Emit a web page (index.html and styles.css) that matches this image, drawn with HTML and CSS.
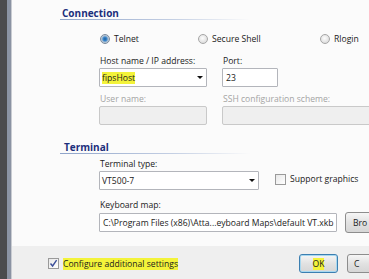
FILE: index.html
```html
<!DOCTYPE html>
<html>
<head>
<meta charset="utf-8">
<link rel="stylesheet" href="styles.css">
</head>
<body>
<div class="window">
  <div class="strip"><div class="s1"></div><div class="s2"></div><div class="s3"></div></div>
  <div class="main">
    <div class="content">
      <div class="title t-conn">Connection</div>
      <div class="rule"></div>
      <div class="radios">
        <div class="radio-item w1"><span class="radio on"></span><span>Telnet</span></div>
        <div class="radio-item w2"><span class="radio"></span><span>Secure Shell</span></div>
        <div class="radio-item"><span class="radio"></span><span>Rlogin</span></div>
      </div>
      <div class="grid g1">
        <div class="label">Host name / IP address:</div>
        <div class="label">Port:</div>
        <div class="box combo"><span class="hl">fipsHost</span><span class="arrow"></span></div>
        <div class="box port">23</div>
      </div>
      <div class="grid g2">
        <div class="label dis">User name:</div>
        <div class="label dis">SSH configuration scheme:</div>
        <div class="box disabled"></div>
        <div class="box disabled wide"></div>
      </div>
      <div class="title t-term">Terminal</div>
      <div class="rule"></div>
      <div class="term">
        <div class="label">Terminal type:</div>
        <div class="row">
          <div class="box combo ttype"><span>VT500-7</span><span class="arrow"></span></div>
          <div class="check-item"><span class="check"></span><span>Support graphics</span></div>
        </div>
        <div class="label kb">Keyboard map:</div>
        <div class="row">
          <div class="box kbmap">C:\Program Files (x86)\Atta...eyboard Maps\default VT.xkb</div>
          <div class="btn browse">Bro</div>
        </div>
      </div>
    </div>
    <div class="footer">
      <div class="check-item cfg"><span class="check checked"><svg width="9" height="9" viewBox="0 0 9 9"><path d="M1.5 4.5 L3.6 7 L7.6 1.2" fill="none" stroke="#3c4f9a" stroke-width="1.4"/></svg></span><span class="hl">Configure additional settings</span></div>
      <div class="btn ok"><span class="hl">OK</span></div>
      <div class="btn cancel">C</div>
    </div>
  </div>
</div>
</body>
</html>
```
FILE: styles.css
```css
html, body { margin: 0; padding: 0; }
body { width: 369px; height: 279px; overflow: hidden; font-family: "Open Sans", "DejaVu Sans", sans-serif; font-size: 8.6px; color: #1a1a1a; }
.window { display: flex; width: 369px; height: 279px; }
.strip { display: flex; width: 12px; flex: none; }
.s1 { width: 7px; background: #4b4b4d; }
.s2 { width: 4px; background: #8b93a3; }
.s3 { width: 1px; background: #c9ccd2; }
.main { flex: 1; display: flex; flex-direction: column; min-width: 0; }
.content { height: 246px; background: #fbfbfb; padding-top: 7px; box-sizing: border-box; overflow: hidden; }
.title { font-weight: bold; font-size: 10px; line-height: 12px; height: 12px; color: #1c2f7c; margin-left: 50px; }
.t-term { margin-left: 52px; margin-top: 16px; }
.rule { height: 1px; width: 190px; margin-left: 48px; background: linear-gradient(to right, #8ea3c9, #c5d0e4 60%, rgba(220,226,236,0)); }
.radios { display: flex; margin-left: 88px; margin-top: 12px; height: 14px; align-items: center; }
.radio-item { display: flex; align-items: center; gap: 4px; }
.w1 { width: 98px; }
.w2 { width: 122px; }
.radio { width: 10px; height: 10px; border-radius: 50%; border: 1px solid #a6a6a6; background: radial-gradient(circle at 45% 40%, #fdfdfd, #d2d2d2); box-sizing: border-box; }
.radio.on { border-color: #7a8a9c; background: radial-gradient(circle, #1d5e9c 0, #3c8ad0 2px, #9fb7cf 3px, #e8e8e8 5px); }
.grid { display: grid; grid-template-columns: 108px 1fr; column-gap: 15px; margin-left: 87px; }
.g1 { margin-top: 10px; }
.g2 { margin-top: 7px; }
.label { line-height: 11px; height: 11px; padding-left: 1px; margin-bottom: 1px; white-space: nowrap; }
.label.dis { color: #a4a4a4; }
.box { height: 19px; border: 1px solid #b3b5bb; background: #fff; box-sizing: border-box; display: flex; align-items: center; padding-left: 2px; white-space: nowrap; overflow: hidden; border-radius: 1px; }
.combo { justify-content: space-between; padding-right: 2px; }
.arrow { width: 0; height: 0; border-left: 3px solid transparent; border-right: 3px solid transparent; border-top: 3px solid #111; margin-right: 1px; }
.port { width: 56px; padding-left: 3px; }
.disabled { background: #efefef; border-color: #c9c9c9; border-radius: 2px; }
.wide { margin-right: -10px; }
.hl { background: #f3f33a; }
.term { margin-left: 87px; margin-top: 5px; }
.row { display: flex; align-items: center; }
.ttype { width: 160px; }
.check-item { display: flex; align-items: center; gap: 4px; }
.term .check-item { margin-left: 16px; margin-top: -3px; }
.check { width: 11px; height: 11px; border: 1px solid #9a9a9a; background: linear-gradient(135deg, #e8e8e8, #ffffff); box-sizing: border-box; display: flex; align-items: center; justify-content: center; }
.kb { margin-top: 10px; }
.kbmap { width: 238px; flex: none; padding-left: 3px; }
.btn { height: 21px; box-sizing: border-box; border: 1px solid #8d8d8d; border-radius: 3px; background: linear-gradient(#f6f6f6, #e2e2e2 50%, #d6d6d6); display: flex; align-items: center; justify-content: center; white-space: nowrap; flex: none; }
.browse { width: 30px; margin-left: 8px; margin-right: -10px; justify-content: flex-start; padding-left: 7px; }
.footer { flex: 1; background: #efefef; display: flex; align-items: center; padding-top: 2px; box-sizing: border-box; }
.cfg { margin-left: 36px; width: 251px; }
.ok { width: 39px; height: 19px; border-color: #3c7fb1; box-shadow: inset 0 0 0 1px #a8d8f0; }
.cancel { width: 30px; height: 19px; margin-left: 9px; margin-right: -10px; justify-content: flex-start; padding-left: 6px; }
```
